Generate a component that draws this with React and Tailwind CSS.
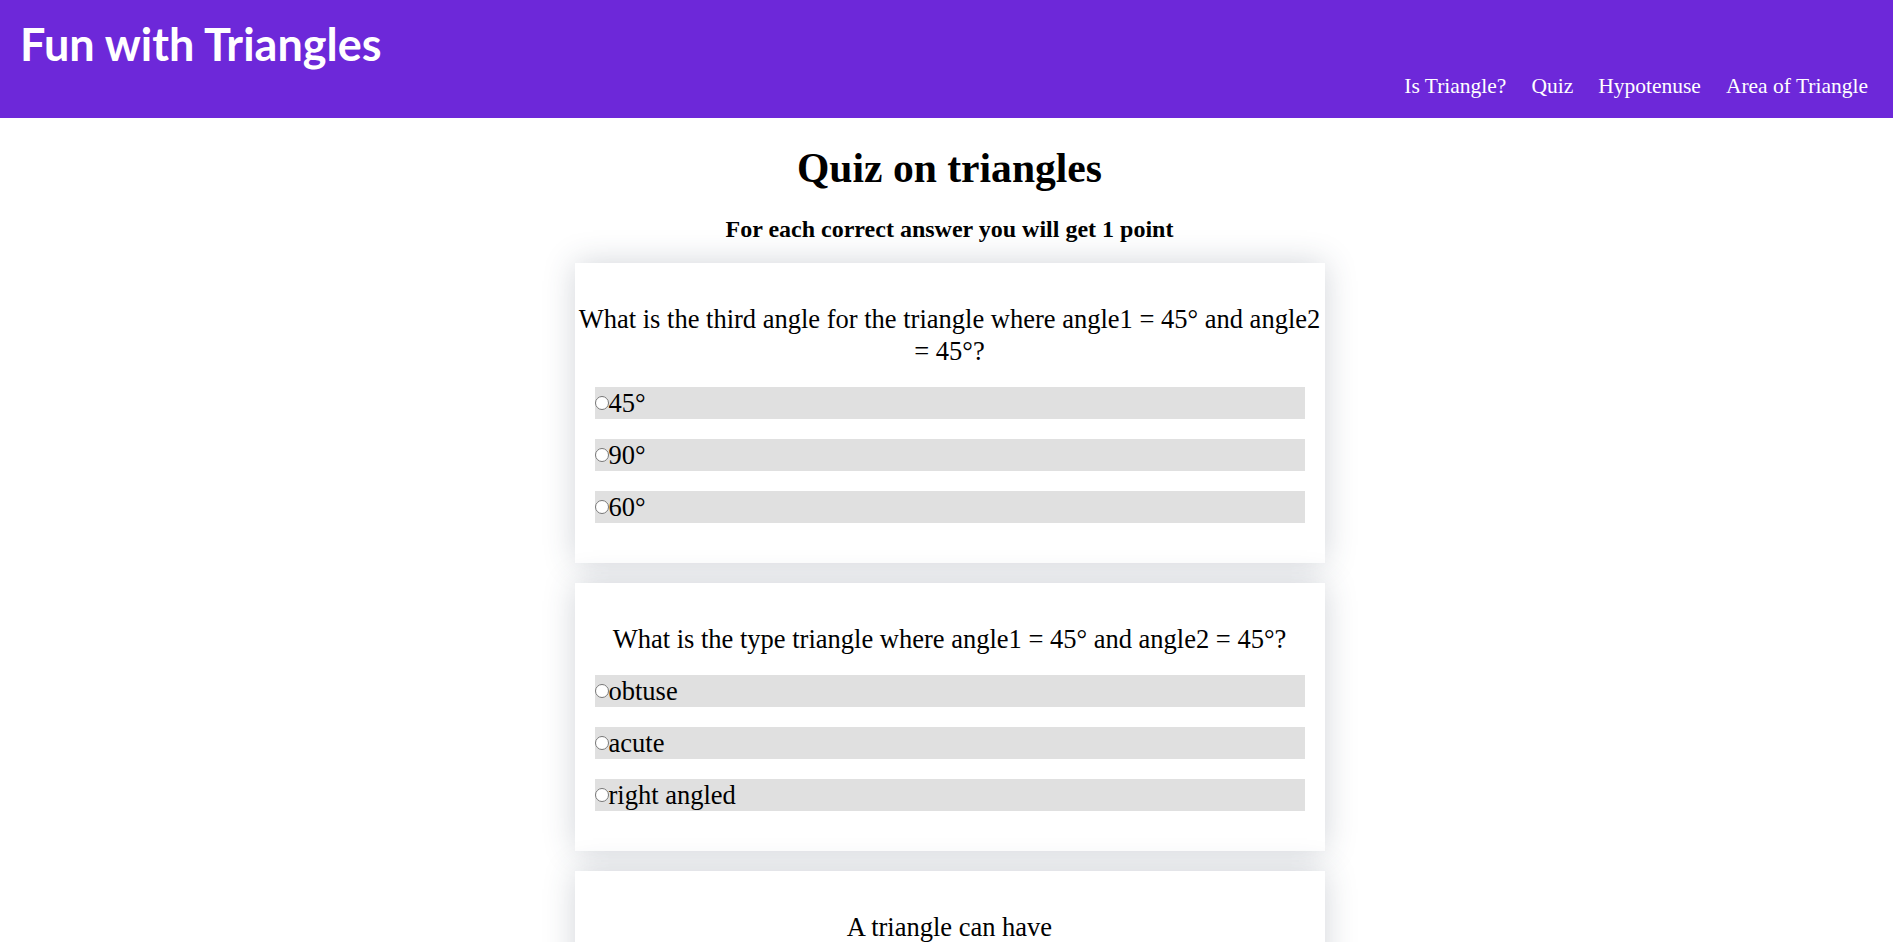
import React from "react";

const questions = [
  {
    q: "What is the third angle for the triangle where angle1 = 45° and angle2 = 45°?",
    options: ["45°", "90°", "60°"],
  },
  {
    q: "What is the type triangle where angle1 = 45° and angle2 = 45°?",
    options: ["obtuse", "acute", "right angled"],
  },
  {
    q: "A triangle can have",
    options: ["one right angle", "two right angles", "no right angle"],
  },
];

function Card({ item, idx }) {
  return (
    <div className="w-[750px] bg-white pt-[40px] pb-[40px] shadow-[0_0_30px_rgba(51,65,85,0.22)]">
      <p className="text-center text-[26.5px] leading-[32px] text-black mb-[20px]">{item.q}</p>
      <div className="flex flex-col gap-[20px] px-[20px]">
        {item.options.map((o) => (
          <label key={o} className="flex items-center h-[32px] bg-[#e0e0e0] text-[26.5px] leading-[32px] text-black">
            <input type="radio" name={`q${idx}`} value={o} className="w-[14px] h-[14px] shrink-0" />
            <span>{o}</span>
          </label>
        ))}
      </div>
    </div>
  );
}

export default function App() {
  return (
    <div className="min-h-screen bg-white font-['Liberation_Serif',serif]">
      <header className="flex h-[118px] justify-between bg-[#6d28d9] text-white">
        <h1 className="pl-[20px] pt-[16px] text-[45px] leading-[56px] font-bold font-['Comic_Sans_MS','Lato',sans-serif]">
          Fun with Triangles
        </h1>
        <nav className="flex items-end pb-[18px] pr-[25px]">
          <ul className="flex gap-[25px] text-[21.5px] leading-[28px]">
            <li><a href="#">Is Triangle?</a></li>
            <li><a href="#">Quiz</a></li>
            <li><a href="#">Hypotenuse</a></li>
            <li><a href="#">Area of Triangle</a></li>
          </ul>
        </nav>
      </header>
      <main className="flex flex-col items-center pl-[6px]">
        <h2 className="mt-[26px] text-[41.6px] leading-[48px] font-bold text-black">Quiz on triangles</h2>
        <h3 className="mt-[21px] text-[24px] leading-[32px] font-bold text-black">
          For each correct answer you will get 1 point
        </h3>
        <div className="mt-[18px] flex flex-col gap-[20px] pb-[40px]">
          {questions.map((item, i) => (
            <Card key={i} item={item} idx={i} />
          ))}
        </div>
      </main>
    </div>
  );
}
